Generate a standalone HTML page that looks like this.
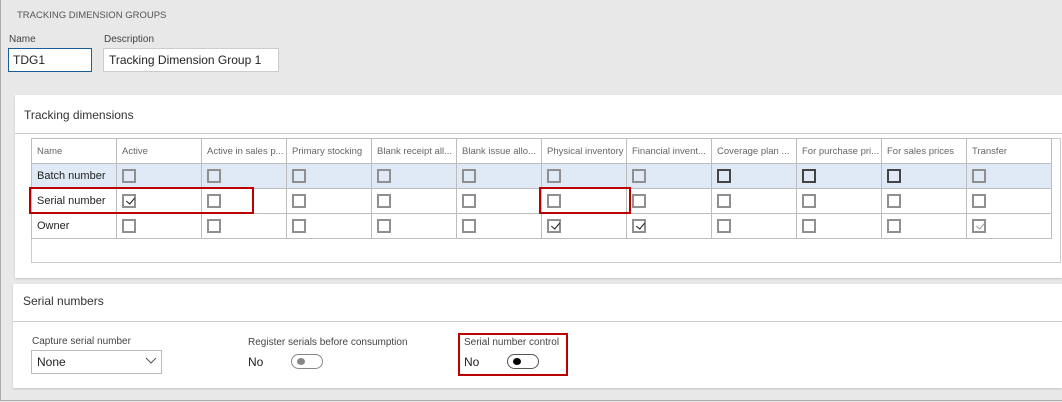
<!DOCTYPE html>
<html><head><style>
*{box-sizing:border-box;margin:0;padding:0}
body{width:1062px;height:402px;background:#e8e8e8;font-family:"Liberation Sans",sans-serif;color:#222;position:relative;overflow:hidden}
.abs{position:absolute}
.lbl{font-size:10px;color:#444}
.panel{position:absolute;background:#fff;box-shadow:0 1px 2px rgba(0,0,0,.15)}
table{border-collapse:collapse;position:absolute;left:31px;top:138px;font-size:9.5px}
td,th{border:1px solid #bdbdbd;height:25px;width:85px;padding:0 0 0 5px;text-align:left;font-weight:normal;white-space:nowrap;overflow:hidden}
th{color:#666}
td.n{font-size:11px;color:#222}
tr.b td{background:#dfeaf6}
.cb{display:inline-block;width:14px;height:14px;border:2px solid #909090;vertical-align:middle;position:relative;background:transparent}
.cb.d{border-color:#444}
.cb.k::after{content:"";position:absolute;left:3.5px;top:0px;width:4px;height:7px;border:solid #111;border-width:0 1.6px 1.6px 0;transform:rotate(40deg)}
.cb.g::after{border-color:#999}
.red{position:absolute;border:2px solid #b00;}
.tog{position:absolute;width:32px;height:15px;border:1.5px solid #555;border-radius:8px}
.tog::after{content:"";position:absolute;left:5px;top:3px;width:8px;height:7px;border-radius:50%;background:#000}
.tog.gr{border-color:#888}
.tog.gr::after{background:#888}
</style></head><body>
<div class="abs" style="left:0;top:0;width:1062px;height:401px;border-left:1px solid #aaa;border-bottom:1px solid #aaa"></div>
<div class="abs" style="left:17px;top:10px;font-size:9.5px;color:#555">TRACKING DIMENSION GROUPS</div>
<div class="abs lbl" style="left:9px;top:34px">Name</div>
<div class="abs lbl" style="left:104px;top:34px">Description</div>
<div class="abs" style="left:8px;top:48px;width:84px;height:24px;border:1px solid #1a5d99;background:#fff;font-size:12px;padding:4px 4px">TDG1</div>
<div class="abs" style="left:103px;top:48px;width:176px;height:24px;border:1px solid #ccc;background:#fff;font-size:12px;padding:4px 5px">Tracking Dimension Group 1</div>

<div class="panel" style="left:15px;top:95px;width:1047px;height:183px">
<div class="abs" style="left:9px;top:13px;font-size:12px;color:#333">Tracking dimensions</div>
<div class="abs" style="left:0;top:38px;width:1047px;border-top:1px solid #ccc"></div>
</div>
<div class="abs" style="left:31px;top:138px;width:1030px;height:125px;border:1px solid #ccc;background:#fff"></div>
<table>
<tr><th>Name</th><th>Active</th><th>Active in sales p...</th><th>Primary stocking</th><th>Blank receipt all...</th><th>Blank issue allo...</th><th>Physical inventory</th><th>Financial invent...</th><th>Coverage plan ...</th><th>For purchase pri...</th><th>For sales prices</th><th>Transfer</th></tr>
<tr class="b"><td class="n">Batch number</td><td><span class="cb"></span></td><td><span class="cb"></span></td><td><span class="cb"></span></td><td><span class="cb"></span></td><td><span class="cb"></span></td><td><span class="cb"></span></td><td><span class="cb"></span></td><td><span class="cb d"></span></td><td><span class="cb d"></span></td><td><span class="cb d"></span></td><td><span class="cb"></span></td></tr>
<tr><td class="n">Serial number</td><td><span class="cb k"></span></td><td><span class="cb"></span></td><td><span class="cb"></span></td><td><span class="cb"></span></td><td><span class="cb"></span></td><td><span class="cb"></span></td><td><span class="cb"></span></td><td><span class="cb"></span></td><td><span class="cb"></span></td><td><span class="cb"></span></td><td><span class="cb"></span></td></tr>
<tr><td class="n">Owner</td><td><span class="cb"></span></td><td><span class="cb"></span></td><td><span class="cb"></span></td><td><span class="cb"></span></td><td><span class="cb"></span></td><td><span class="cb k"></span></td><td><span class="cb k"></span></td><td><span class="cb"></span></td><td><span class="cb"></span></td><td><span class="cb"></span></td><td><span class="cb k g"></span></td></tr>
</table>
<div class="red" style="left:29px;top:187px;width:225px;height:27px"></div>
<div class="red" style="left:539px;top:187px;width:92px;height:27px"></div>

<div class="panel" style="left:13px;top:284px;width:1049px;height:104px">
<div class="abs" style="left:10px;top:10px;font-size:12px;color:#333">Serial numbers</div>
<div class="abs" style="left:0;top:37px;width:1049px;border-top:1px solid #ccc"></div>
</div>
<div class="abs lbl" style="left:32px;top:336px">Capture serial number</div>
<div class="abs" style="left:31px;top:350px;width:131px;height:24px;border:1px solid #bbb;background:#fff;font-size:12px;padding:4px 5px">None</div>
<svg class="abs" style="left:145px;top:357px" width="12" height="8"><path d="M1 1 L6 6 L11 1" fill="none" stroke="#555" stroke-width="1"/></svg>
<div class="abs lbl" style="left:248px;top:337px">Register serials before consumption</div>
<div class="abs" style="left:248px;top:355px;font-size:12px">No</div>
<div class="tog gr" style="left:291px;top:354px"></div>
<div class="abs lbl" style="left:464px;top:337px">Serial number control</div>
<div class="abs" style="left:464px;top:355px;font-size:12px">No</div>
<div class="tog" style="left:507px;top:354px"></div>
<div class="red" style="left:458px;top:333px;width:110px;height:43px"></div>
</body></html>
